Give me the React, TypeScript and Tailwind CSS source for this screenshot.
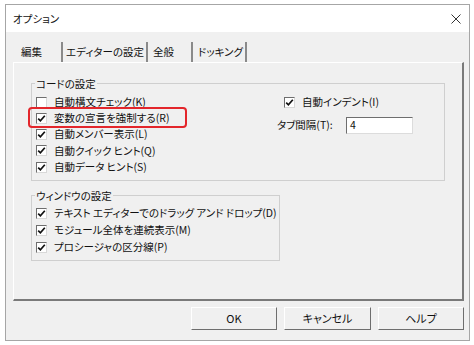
import React from 'react';

const font = "font-['Noto_Sans_CJK_JP','Noto_Sans',sans-serif] [font-feature-settings:'palt']";

const CheckBox: React.FC<{ checked?: boolean }> = ({ checked }) => (
  <span className="inline-flex h-[11px] w-[11px] shrink-0 items-center justify-center border border-t-[#6e6e6e] border-l-[#6e6e6e] border-r-[#d8d8d8] border-b-[#d8d8d8] bg-white">
    {checked && (
      <svg width="9" height="9" viewBox="0 0 9 9">
        <path d="M1.2 4.6 L3.4 6.8 L7.8 1.8" fill="none" stroke="#111" strokeWidth="1.7" />
      </svg>
    )}
  </span>
);

const Row: React.FC<{ label: string; checked?: boolean; h: string }> = ({ label, checked, h }) => (
  <div className={`flex items-center gap-[7px] ${h}`}>
    <CheckBox checked={checked} />
    <span className="whitespace-nowrap leading-none">{label}</span>
  </div>
);

const tabs = [
  { label: '編集', w: 'w-[50px] pl-[8px]' },
  { label: 'エディターの設定', w: 'w-[85px] pl-[3px]' },
  { label: '全般', w: 'w-[45px] pl-[5px]' },
  { label: 'ドッキング', w: 'w-[54px] pl-[5px]' },
];

const Button: React.FC<{ label: string; w: string }> = ({ label, w }) => (
  <button className={`${w} h-[23px] border border-t-white border-l-white border-r-[#6e6e6e] border-b-[#6e6e6e] bg-[#f0f0f0] text-[11px] text-[#111]`}>
    {label}
  </button>
);

export default function App() {
  return (
    <div className={`h-[345px] w-[474px] bg-white pl-[5px] pt-[4px] text-[10.5px] text-[#111] ${font}`}>
      <div className="flex h-[337px] w-[465px] flex-col border border-[#a6a6a6]">
        <div className="flex h-[27px] items-center justify-between bg-white pl-[7px] pr-[8px]">
          <span className="text-[10.5px]">オプション</span>
          <svg width="10" height="10" viewBox="0 0 10 10">
            <path d="M0.5 0.5 L9.5 9.5 M9.5 0.5 L0.5 9.5" stroke="#333" strokeWidth="1" />
          </svg>
        </div>
        <div className="flex flex-1 flex-col bg-[#f0f0f0] pl-[7px] pr-[5px] pt-[10px]">
          <div className="flex h-[20px]">
            {tabs.map((t) => (
              <div key={t.label} className={`${t.w} flex items-center whitespace-nowrap border-r-[2px] border-r-[#8a8a8a] text-[10.5px]`}>
                {t.label}
              </div>
            ))}
          </div>
          <div className="flex h-[239px] flex-col items-start border-l border-t border-b-[2px] border-r-[2px] border-l-white border-t-white border-b-[#7a7a7a] border-r-[#7a7a7a] pl-[17px] pt-[20px]">
            <div className="relative h-[98px] w-[414px] border border-[#cfcfcf]">
              <span className="absolute -top-[8px] left-[3px] whitespace-nowrap bg-[#f0f0f0] px-[1px] leading-[16px]">コードの設定</span>
              <div className="flex pl-[4px] pt-[10px]">
                <div className="w-[241px]">
                  <Row label="自動構文チェック(K)" h="h-[16.25px]" />
                  <Row label="変数の宣言を強制する(R)" checked h="h-[16.25px]" />
                  <Row label="自動メンバー表示(L)" checked h="h-[16.25px]" />
                  <Row label="自動クイック ヒント(Q)" checked h="h-[16.25px]" />
                  <Row label="自動データ ヒント(S)" checked h="h-[16.25px]" />
                </div>
                <div className="flex flex-col">
                  <div className="pl-[7px]">
                    <Row label="自動インデント(I)" checked h="h-[16.5px]" />
                  </div>
                  <div className="mt-[6px] flex items-center">
                    <span className="w-[69px] whitespace-nowrap">タブ間隔(T):</span>
                    <div className="flex h-[17px] w-[67px] items-center border border-t-[#6e6e6e] border-l-[#6e6e6e] border-r-[#dcdcdc] border-b-[#dcdcdc] bg-white pl-[3px]">
                      4
                    </div>
                  </div>
                </div>
              </div>
              <div className="absolute left-[-4px] top-[23px] h-[21px] w-[159px] rounded-[4px] border-[2px] border-[#e3262b]" />
            </div>
            <div className="relative mt-[14px] h-[66px] w-[249px] border border-[#cfcfcf]">
              <span className="absolute -top-[8px] left-[3px] whitespace-nowrap bg-[#f0f0f0] px-[1px] leading-[16px]">ウィンドウの設定</span>
              <div className="pl-[4px] pt-[9px]">
                <Row label="テキスト エディターでのドラッグ アンド ドロップ(D)" checked h="h-[17px]" />
                <Row label="モジュール全体を連続表示(M)" checked h="h-[17px]" />
                <Row label="プロシージャの区分線(P)" checked h="h-[17px]" />
              </div>
            </div>
          </div>
          <div className="mt-[6px] flex justify-end gap-[7px]">
            <Button label="OK" w="w-[86px]" />
            <Button label="キャンセル" w="w-[87px]" />
            <Button label="ヘルプ" w="w-[86px]" />
          </div>
        </div>
      </div>
    </div>
  );
}
